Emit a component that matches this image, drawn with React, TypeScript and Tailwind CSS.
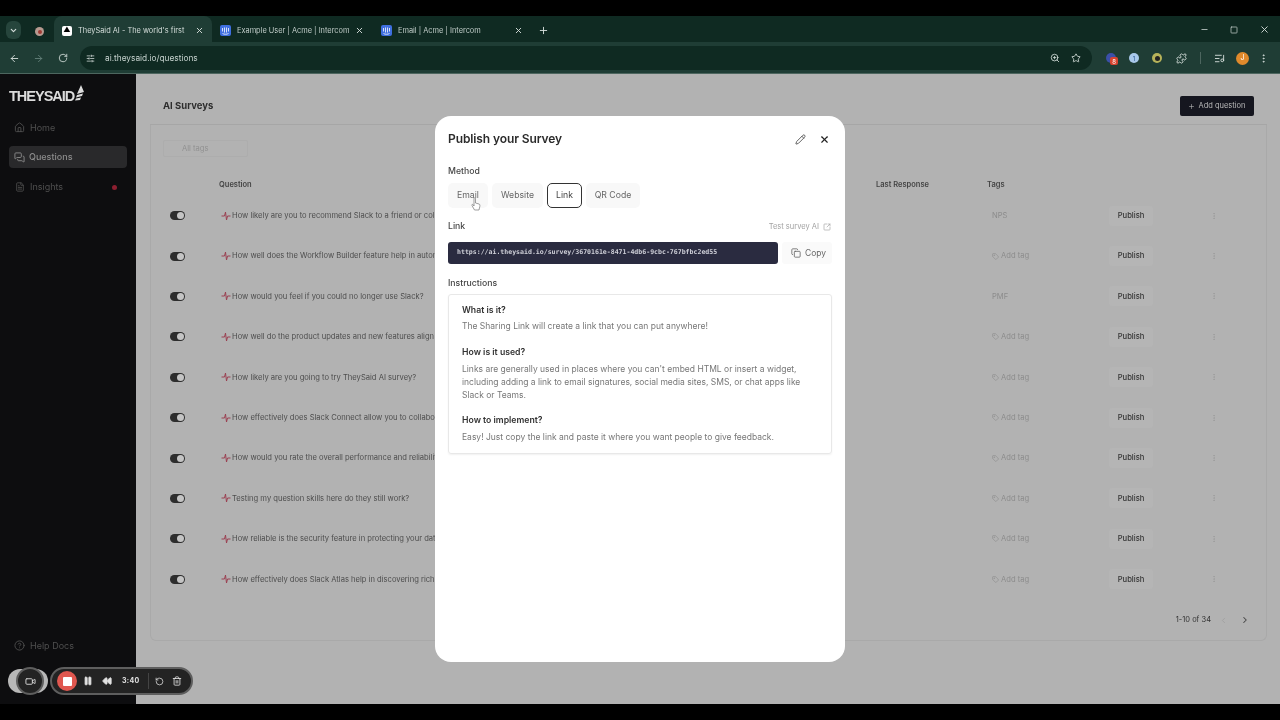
import React from "react";
import {
  ArrowLeft, ArrowRight, RotateCw, SlidersHorizontal, ZoomIn, Star, Puzzle, ListMusic, MoreVertical,
  X, Plus, Minus, Copy, Pencil, SquareArrowOutUpRight, Home, MessagesSquare, FileText, HelpCircle, Tag,
  ChevronLeft, ChevronRight, ChevronDown, Video, RotateCcw, Trash2, Pause, Rewind, Square,
} from "lucide-react";

const rows: [string, string][] = [
  ["How likely are you to recommend Slack to a friend or colleague?", "NPS"],
  ["How well does the Workflow Builder feature help in automating tasks?", ""],
  ["How would you feel if you could no longer use Slack?", "PMF"],
  ["How well do the product updates and new features align with your needs?", ""],
  ["How likely are you going to try TheySaid AI survey?", ""],
  ["How effectively does Slack Connect allow you to collaborate externally?", ""],
  ["How would you rate the overall performance and reliability of Slack?", ""],
  ["Testing my question skills here do they still work?", ""],
  ["How reliable is the security feature in protecting your data?", ""],
  ["How effectively does Slack Atlas help in discovering rich profiles?", ""],
];

function Spark() {
  return (
    <svg width="10" height="10" viewBox="0 0 10 10" className="shrink-0">
      <path d="M0.5 5H3.5L4.5 1L5.5 9L6.5 5H9.5" fill="none" stroke="#9b3f50" strokeWidth="1" />
    </svg>
  );
}

function Intercom() {
  return (
    <svg width="11" height="11" viewBox="0 0 11 11" className="shrink-0">
      <rect width="11" height="11" rx="2" fill="#3f6fe0" />
      <path d="M2.5 3V6.5M4.5 2.5V7.5M6.5 2.5V7.5M8.5 3V6.5M2.5 8.5C4 9.5 7 9.5 8.5 8.5" stroke="#fff" strokeWidth="0.8" fill="none" />
    </svg>
  );
}

function Tab({ icon, title, active, width }: { icon: React.ReactNode; title: string; active?: boolean; width: string }) {
  return (
    <div className={`flex h-[26px] items-center gap-[6px] rounded-t-lg pl-[8px] pt-[3px] text-[7.400px] ${width} ${active ? "bg-[#1f3d35] text-[#d5dedb]" : "text-[#c0ccc8]"}`}>
      {icon}
      <span className="flex-1 whitespace-nowrap">{title}</span>
      <X size={9} strokeWidth={2.5} className="shrink-0 text-[#d5dedb]" />
    </div>
  );
}

function Row({ q, tag }: { q: string; tag: string }) {
  return (
    <div className="flex h-[40.4px] items-center">
      <div className="ml-[7px] flex h-[9px] w-[15px] items-center justify-end rounded-full bg-[#2d2d2d] pr-[1px]">
        <div className="h-[7px] w-[7px] rounded-full bg-[#c4c4c4]" />
      </div>
      <div className="ml-[36px] flex w-[698px] items-center gap-[1px] overflow-hidden">
        <Spark />
        <span className="whitespace-nowrap text-[7.600px] text-[#4d4d4d]">{q}</span>
      </div>
      <div className="ml-[73px] flex w-[117px] items-center gap-[2px] text-[7.600px] text-[#8c8c8c]">
        {tag ? tag : (
          <>
            <Tag size={7} />
            <span>Add tag</span>
          </>
        )}
      </div>
      <div className="flex h-[20px] w-[44px] items-center justify-center rounded-[3px] bg-[#b5b5b5] text-[7.600px] font-medium text-[#333]">Publish</div>
      <MoreVertical size={8} className="ml-[57px] text-[#9a9a9a]" />
    </div>
  );
}

function MethodTab({ label, active, width }: { label: string; active?: boolean; width: string }) {
  return (
    <div className={`flex h-[25px] items-center justify-center rounded-[5px] text-[8.700px] ${width} ${active ? "border border-[#333] bg-white text-[#444]" : "bg-[#f8f8f8] text-[#666]"}`}>
      {label}
    </div>
  );
}

export default function App() {
  return (
    <div className="relative flex h-[720px] w-[1280px] flex-col overflow-hidden bg-black font-['Inter',sans-serif] blur-[0.5px]">
      <div className="h-[16px] shrink-0 bg-black" />

      {/* browser chrome */}
      <div className="flex h-[26px] shrink-0 items-end bg-[#0f2a22] pl-[6px]">
        <div className="mb-[3px] flex h-[18px] w-[15px] items-center justify-center rounded-md bg-[#26453c] text-[#d5dedb]">
          <ChevronDown size={9} strokeWidth={3} />
        </div>
        <div className="mb-[6px] ml-[14px] mr-[10px] flex h-[9px] w-[9px] items-center justify-center rounded-full bg-[#b79a90]">
          <div className="h-[4px] w-[4px] rounded-full bg-[#a03b35]" />
        </div>
        <Tab
          active
          width="w-[158px] pr-[8px]"
          title="TheySaid AI - The world's first"
          icon={<div className="flex h-[10px] w-[10px] shrink-0 items-center justify-center rounded-[2px] bg-white text-[7px] font-bold text-black">▲</div>}
        />
        <Tab width="w-[161px] pr-[12px]" title="Example User | Acme | Intercom" icon={<Intercom />} />
        <Tab width="w-[158px] pr-[8px]" title="Email | Acme | Intercom" icon={<Intercom />} />
        <Plus size={11} className="mb-[6px] ml-[7px] text-[#d5dedb]" />
        <div className="flex-1" />
        <div className="mb-[7px] flex items-center gap-[21px] pr-[10px] text-[#d5dedb]">
          <Minus size={9} />
          <Square size={8} />
          <X size={11} />
        </div>
      </div>
      <div className="flex h-[32px] shrink-0 items-center border-b border-[#4d665f] bg-[#1f3d35] pr-[8px] pt-[1px] text-[#d5dedb]">
        <ArrowLeft size={11} className="ml-[9px]" />
        <ArrowRight size={11} className="ml-[13px] text-[#64807a]" />
        <RotateCw size={10} className="ml-[14px]" />
        <div className="ml-[12px] flex h-[24px] w-[1012px] items-center rounded-full bg-[#0f2a22] pl-[6px] pr-[11px]">
          <SlidersHorizontal size={9} />
          <span className="ml-[10px] text-[8.300px] text-[#c6d2ce]">ai.theysaid.io/questions</span>
          <div className="flex-1" />
          <ZoomIn size={10} />
          <Star size={10} className="ml-[11px]" />
        </div>
        <div className="relative ml-[14px] h-[10px] w-[10px] rounded-full bg-[#3b4fa8]">
          <div className="absolute left-[4px] top-[4px] flex h-[8px] w-[8px] items-center justify-center rounded-[2px] bg-[#d8432f] text-[6px] text-white">8</div>
        </div>
        <div className="ml-[13px] flex h-[10px] w-[10px] items-center justify-center rounded-full bg-[#a9c8ea] text-[6px] text-[#27548f]">1</div>
        <div className="ml-[13px] flex h-[10px] w-[10px] items-center justify-center rounded-full bg-[#b7b35a]">
          <div className="h-[5px] w-[5px] rounded-full bg-[#222]" />
        </div>
        <Puzzle size={11} className="ml-[14px]" />
        <div className="ml-[13px] h-[12px] w-px bg-[#4d665f]" />
        <ListMusic size={11} className="ml-[13px]" />
        <div className="ml-[11px] flex h-[13px] w-[13px] items-center justify-center rounded-full bg-[#e08a2c] text-[7px] text-white">J</div>
        <MoreVertical size={11} className="ml-[9px]" />
      </div>

      {/* page */}
      <div className="flex h-[630px] shrink-0">
        <aside className="flex w-[136px] shrink-0 flex-col bg-[#0d0d0f] pb-[20px]">
          <div className="ml-[9px] mt-[12px] flex h-[21px] items-start">
            <span className="font-['Liberation_Sans',sans-serif] text-[14.500px] font-bold leading-[21px] tracking-[-1px] text-[#dcdcdc]">THEYSAID</span>
            <svg width="10" height="16" viewBox="0 0 10 16" className="-mt-[1px] ml-[1px]">
              <path d="M6 0L9 7L2 9ZM2 10L8 8.500L7 11L1 12.500ZM1 13.500L6 12.500L5 15L0 15.500Z" fill="#dcdcdc" />
            </svg>
          </div>
          <div className="ml-[14px] mt-[10px] flex h-[21px] items-center gap-[5px] text-[9px] text-[#4f4f4f]">
            <Home size={11} />
            <span>Home</span>
          </div>
          <div className="ml-[9px] mt-[8px] flex h-[22px] w-[118px] items-center gap-[4px] rounded-[4px] bg-[#29292b] pl-[4px] text-[9px] font-medium text-[#8c8c8c]">
            <MessagesSquare size={11} className="ml-[1px]" />
            <span>Questions</span>
          </div>
          <div className="ml-[15px] mt-[8px] flex h-[22px] w-[102px] items-center gap-[5px] text-[9px] text-[#4f4f4f]">
            <FileText size={10} />
            <span className="flex-1">Insights</span>
            <div className="h-[5px] w-[5px] rounded-full bg-[#8c1f30]" />
          </div>
          <div className="flex-1" />
          <div className="mb-[10px] ml-[14px] flex items-center gap-[5px] text-[9px] text-[#4f4f4f]">
            <HelpCircle size={11} />
            <span>Help Docs</span>
          </div>
          <div className="h-[22px]" />
        </aside>

        <main className="flex flex-1 flex-col bg-[#b2b2b2] pl-[14px] pr-[13px]">
          <header className="flex h-[51px] shrink-0 items-end justify-between border-b border-[#a6a6a6] pb-[8px] pl-[13px] pr-[13px]">
            <span className="mb-[3px] text-[9.500px] font-bold text-[#2e2e2e]">AI Surveys</span>
            <div className="flex h-[20px] w-[74px] items-center justify-center gap-[3px] rounded-[2px] bg-[#15161f] text-[7.500px] text-[#b9b9b9]">
              <Plus size={7} />
              <span>Add question</span>
            </div>
          </header>
          <section className="flex h-[516px] shrink-0 flex-col rounded-b-md border-x border-b border-[#a9a9a9] pl-[12px] pr-[10px]">
            <div className="mt-[15px] flex h-[17px] w-[85px] items-center rounded-[2px] border border-[#adadad] pl-[18px] text-[7.600px] text-[#919191]">All tags</div>
            <div className="mt-[21px] flex h-[14px] items-center text-[7.500px] font-semibold text-[#444]">
              <span className="ml-[56px] w-[657px]">Question</span>
              <span className="w-[111px]">Last Response</span>
              <span>Tags</span>
            </div>
            <div className="mt-[3.500px] flex flex-col">
              {rows.map(([q, t]) => (
                <Row key={q} q={q} tag={t} />
              ))}
            </div>
            <div className="mt-[15px] flex items-center justify-end pr-[6px] text-[7.500px] text-[#333]">
              <span>1-10 of 34</span>
              <ChevronLeft size={9} className="ml-[8px] text-[#9d9d9d]" />
              <ChevronRight size={10} strokeWidth={2.500} className="ml-[12px] text-[#444]" />
            </div>
          </section>
        </main>
      </div>
      <div className="flex-1 bg-black" />

      {/* modal */}
      <div className="absolute left-[435px] top-[116px] flex h-[546px] w-[410px] flex-col rounded-[16px] bg-white px-[13px] pt-[14px]">
        <div className="flex h-[18px] items-center">
          <span className="flex-1 text-[12px] font-semibold tracking-[-0.1px] text-[#2b2b2b]">Publish your Survey</span>
          <Pencil size={11} className="text-[#555]" />
          <X size={11} strokeWidth={2.500} className="ml-[13px] mr-[2px] text-[#222]" />
        </div>
        <div className="mt-[17px] text-[8.700px] font-medium leading-[12px] text-[#444]">Method</div>
        <div className="mt-[6px] flex gap-[4px]">
          <MethodTab label="Email" width="w-[40px]" />
          <MethodTab label="Website" width="w-[51px]" />
          <MethodTab label="Link" width="w-[35px]" active />
          <MethodTab label="QR Code" width="w-[54px]" />
        </div>
        <div className="mt-[13px] flex h-[12px] items-center pr-[1px]">
          <span className="flex-1 text-[8.700px] font-medium text-[#444]">Link</span>
          <span className="text-[7.500px] text-[#a3a3a3]">Test survey AI</span>
          <SquareArrowOutUpRight size={8} className="ml-[4px] text-[#a3a3a3]" />
        </div>
        <div className="mt-[9px] flex h-[22px] items-center gap-[4px]">
          <div className="flex h-full w-[330px] items-center rounded-[3px] bg-[#2a2b40] pl-[9px] font-['DejaVu_Sans_Mono',monospace] text-[6.550px] font-bold text-[#cfd0d8]">
            https://ai.theysaid.io/survey/3670161e-8471-4db6-9cbc-767bfbc2ed55
          </div>
          <div className="flex h-full w-[50px] items-center justify-center gap-[4px] rounded-[3px] bg-[#fafafa] pl-[3px] text-[8.500px] text-[#666]">
            <Copy size={10} />
            <span>Copy</span>
          </div>
        </div>
        <div className="mt-[13px] text-[8.700px] font-medium leading-[12px] text-[#444]">Instructions</div>
        <div className="mt-[5px] h-[160px] w-[384px] rounded-[3px] border border-[#e8e8e8] pl-[13px] pt-[9px] shadow-[0_1px_2px_rgba(0,0,0,0.06)]">
          <div className="text-[8.700px] font-semibold leading-[12px] text-[#333]">What is it?</div>
          <div className="mt-[4px] text-[8.500px] leading-[13px] text-[#777]">The Sharing Link will create a link that you can put anywhere!</div>
          <div className="mt-[13px] text-[8.700px] font-semibold leading-[12px] text-[#333]">How is it used?</div>
          <div className="mt-[5px] w-[345px] text-[8.500px] leading-[13px] text-[#777]">
            Links are generally used in places where you can't embed HTML or insert a widget, including adding a link to email signatures, social media sites, SMS, or chat apps like Slack or Teams.
          </div>
          <div className="mt-[12px] text-[8.700px] font-semibold leading-[12px] text-[#333]">How to implement?</div>
          <div className="mt-[5px] text-[8.500px] leading-[13px] text-[#777]">Easy! Just copy the link and paste it where you want people to give feedback.</div>
        </div>
      </div>

      {/* cursor */}
      <svg width="10" height="14" viewBox="0 0 10 14" className="absolute left-[471px] top-[197px]">
        <path d="M3 1.500C3 .5 4.500 .5 4.500 1.500V6L8 7C9 7.500 9 8 8.800 9.500L8 13H3.500L1 8.500C.5 7.500 1.500 7 2.200 7.800L3 9Z" fill="#fff" stroke="#777" strokeWidth="0.7" />
      </svg>

      {/* recorder */}
      <div className="absolute left-[8px] top-[669px] h-[24px] w-[40px] rounded-full bg-[#b8b8b8]" />
      <div className="absolute left-[16px] top-[667px] flex h-[28px] w-[28px] items-center justify-center rounded-full border-2 border-[#5e5e5e] bg-[#232323] text-[#d9d9d9]">
        <Video size={11} />
      </div>
      <div className="absolute left-[50px] top-[667px] flex h-[28px] w-[143px] items-center rounded-full border-2 border-[#5e5e5e] bg-[#232323] pl-[5px] text-[#e2e2e2]">
        <div className="flex h-[20px] w-[20px] items-center justify-center rounded-full bg-[#e0574f]">
          <div className="h-[9px] w-[9px] rounded-[1px] bg-white" />
        </div>
        <Pause size={10} fill="currentColor" className="ml-[6px]" />
        <Rewind size={10} fill="currentColor" className="ml-[9px]" />
        <span className="ml-[10px] text-[7px] font-bold tracking-[0.3px]">3:40</span>
        <div className="ml-[8px] h-[16px] w-px bg-[#444]" />
        <RotateCcw size={9} className="ml-[6px]" />
        <Trash2 size={10} className="ml-[8px]" />
      </div>
    </div>
  );
}
